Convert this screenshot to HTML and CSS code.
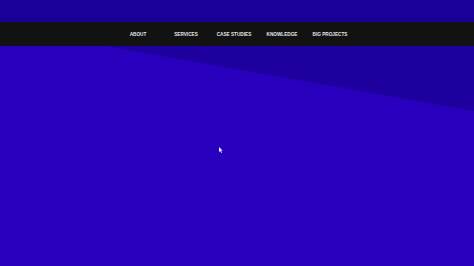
FILE: index.html
```html
<!DOCTYPE html>
<html lang="en">
<head>
<meta charset="utf-8">
<title>Home</title>
<link rel="stylesheet" href="styles.css">
</head>
<body>
<header class="top"></header>
<nav class="nav">
  <a class="nav-item" href="#">ABOUT</a>
  <a class="nav-item" href="#">SERVICES</a>
  <a class="nav-item" href="#">CASE STUDIES</a>
  <a class="nav-item" href="#">KNOWLEDGE</a>
  <a class="nav-item" href="#">BIG PROJECTS</a>
</nav>
<main class="hero">
  <svg class="cursor" width="4" height="6" viewBox="0 0 4 6"><path d="M0 0 L0 5 L1.2 4 L2.2 6 L3 5.6 L2 3.7 L3.6 3.6 Z" fill="#e8e8ff"/></svg>
</main>
</body>
</html>
```
FILE: styles.css
```css
html, body {
  margin: 0;
  padding: 0;
  width: 474px;
  height: 266px;
  overflow: hidden;
  background: #1b0097;
  font-family: "Liberation Sans", Arial, sans-serif;
}
.top {
  height: 22px;
  background: #1b0097;
}
.nav {
  height: 24px;
  background: #121212;
  display: flex;
  justify-content: center;
  align-items: center;
  padding-right: 6px;
}
.nav-item {
  width: 48px;
  text-align: center;
  color: #e6e6e6;
  font-size: 4.7px;
  font-weight: bold;
  text-decoration: none;
  letter-spacing: 0;
  white-space: nowrap;
}
.hero {
  position: relative;
  height: 220px;
  background: #2900bd;
}
.hero::before {
  content: "";
  position: absolute;
  inset: 0;
  background: #1e009f;
  clip-path: polygon(105px 0, 474px 0, 474px 65px);
}
.cursor {
  position: absolute;
  left: 219px;
  top: 101px;
}
```
